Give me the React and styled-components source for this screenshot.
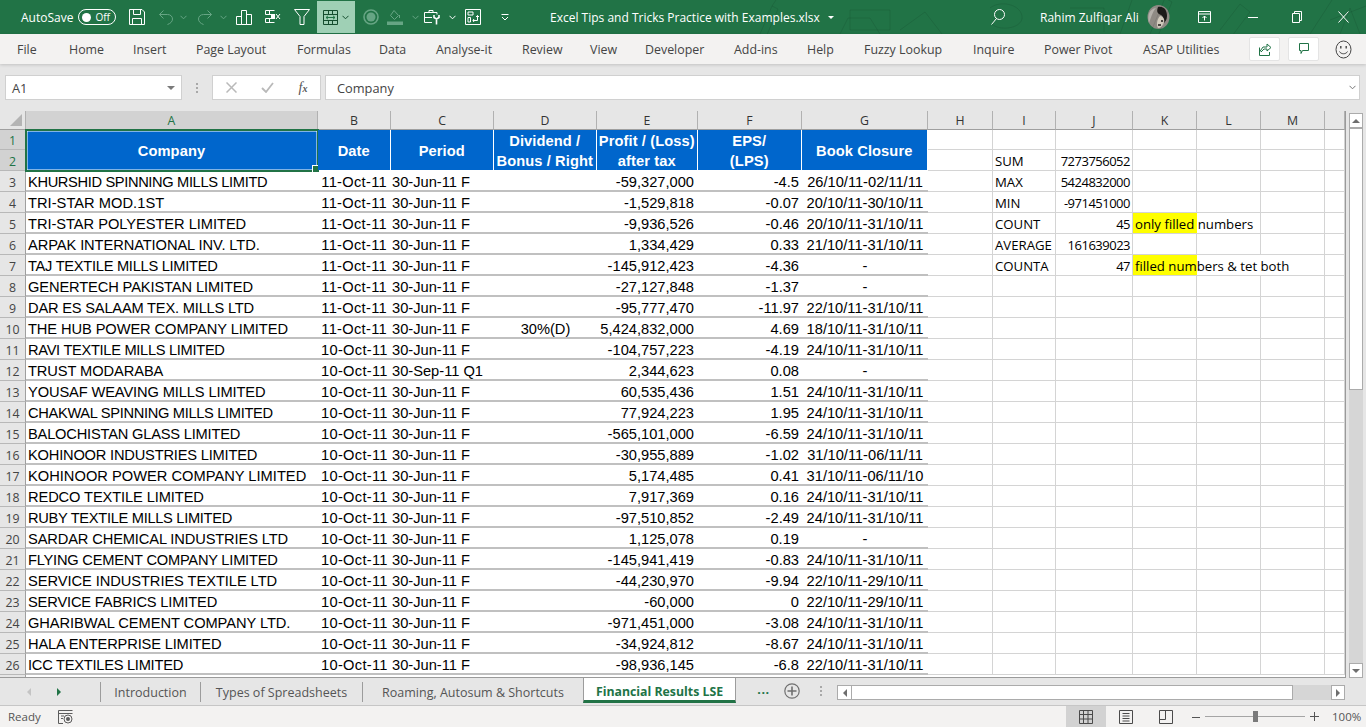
import React from 'react';
import styled, { createGlobalStyle } from 'styled-components';

const UI_FONT = '"Open Sans", "Noto Sans", sans-serif';
const GREEN = '#217346';

const GlobalStyle = createGlobalStyle`
  html, body { margin: 0; height: 100%; overflow: hidden; background: #e6e6e6; }
  body { font-family: ${UI_FONT}; }
  * { box-sizing: border-box; }
`;

const COLS = ['A', 'B', 'C', 'D', 'E', 'F', 'G', 'H', 'I', 'J', 'K', 'L', 'M', ''];
const COL_WIDTHS = [292, 73, 103, 103, 101, 104, 126, 65, 63, 77, 64, 64, 64, 20];

const HEADERS = [
  ['Company'],
  ['Date'],
  ['Period'],
  ['Dividend /', 'Bonus / Right'],
  ['Profit / (Loss)', 'after tax'],
  ['EPS/', '(LPS)'],
  ['Book Closure'],
];

// last arg is letter-spacing: the original uses hinted Arial, capitals come out at uneven widths
const row = (name, date, period, div, profit, eps, closure, track) => ({ name, date, period, div, profit, eps, closure, track });
const F = '30-Jun-11 F';
const D1 = '11-Oct-11';
const D2 = '10-Oct-11';

const RECORDS = [
  row('KHURSHID SPINNING MILLS LIMITD', D1, F, '', '-59,327,000', '-4.5', '26/10/11-02/11/11', -0.36),
  row('TRI-STAR MOD.1ST', D1, F, '', '-1,529,818', '-0.07', '20/10/11-30/10/11', 0.03),
  row('TRI-STAR POLYESTER LIMITED', D1, F, '', '-9,936,526', '-0.46', '20/10/11-31/10/11', -0.045),
  row('ARPAK INTERNATIONAL INV. LTD.', D1, F, '', '1,334,429', '0.33', '21/10/11-31/10/11', -0.09),
  row('TAJ TEXTILE MILLS LIMITED', D1, F, '', '-145,912,423', '-4.36', '-', -0.28),
  row('GENERTECH PAKISTAN LIMITED', D1, F, '', '-27,127,848', '-1.37', '-', -0.12),
  row('DAR ES SALAAM TEX. MILLS LTD', D1, F, '', '-95,777,470', '-11.97', '22/10/11-31/10/11', -0.2),
  row('THE HUB POWER COMPANY LIMITED', D1, F, '30%(D)', '5,424,832,000', '4.69', '18/10/11-31/10/11', -0.09),
  row('RAVI TEXTILE MILLS LIMITED', D2, F, '', '-104,757,223', '-4.19', '24/10/11-31/10/11', -0.31),
  row('TRUST MODARABA', D2, '30-Sep-11 Q1', '', '2,344,623', '0.08', '-', -0.09),
  row('YOUSAF WEAVING MILLS LIMITED', D2, F, '', '60,535,436', '1.51', '24/10/11-31/10/11', -0.12),
  row('CHAKWAL SPINNING MILLS LIMITED', D2, F, '', '77,924,223', '1.95', '24/10/11-31/10/11', -0.33),
  row('BALOCHISTAN GLASS LIMITED', D2, F, '', '-565,101,000', '-6.59', '24/10/11-31/10/11', -0.2),
  row('KOHINOOR INDUSTRIES LIMITED', D2, F, '', '-30,955,889', '-1.02', '31/10/11-06/11/11', -0.2),
  row('KOHINOOR POWER COMPANY LIMITED', D2, F, '', '5,174,485', '0.41', '31/10/11-06/11/10', 0.01),
  row('REDCO TEXTILE LIMITED', D2, F, '', '7,917,369', '0.16', '24/10/11-31/10/11', -0.11),
  row('RUBY TEXTILE MILLS LIMITED', D2, F, '', '-97,510,852', '-2.49', '24/10/11-31/10/11', -0.31),
  row('SARDAR CHEMICAL INDUSTRIES LTD', D2, F, '', '1,125,078', '0.19', '-', -0.13),
  row('FLYING CEMENT COMPANY LIMITED', D2, F, '', '-145,941,419', '-0.83', '24/10/11-31/10/11', -0.23),
  row('SERVICE INDUSTRIES TEXTILE LTD', D2, F, '', '-44,230,970', '-9.94', '22/10/11-29/10/11', -0.06),
  row('SERVICE FABRICS LIMITED', D2, F, '', '-60,000', '0', '22/10/11-29/10/11', -0.16),
  row('GHARIBWAL CEMENT COMPANY LTD.', D2, F, '', '-971,451,000', '-3.08', '24/10/11-31/10/11', -0.06),
  row('HALA ENTERPRISE LIMITED', D2, F, '', '-34,924,812', '-8.67', '24/10/11-31/10/11', -0.16),
  row('ICC TEXTILES LIMITED', D2, F, '', '-98,936,145', '-6.8', '22/10/11-31/10/11', -0.26),
];

// side calculations in columns I..K, keyed by sheet row
const SUMMARY = {
  2: ['SUM', '7273756052'],
  3: ['MAX', '5424832000'],
  4: ['MIN', '-971451000'],
  5: ['COUNT', '45', 'only filled numbers'],
  6: ['AVERAGE', '161639023'],
  7: ['COUNTA', '47', 'filled numbers & tet both'],
};

const Page = styled.div`
  width: 1366px;
  height: 727px;
  display: flex;
  flex-direction: column;
  overflow: hidden;
  background: #e6e6e6;
  font-family: ${UI_FONT};
`;

/* title bar */
const TitleBar = styled.header`
  position: relative;
  height: 34px;
  flex: none;
  display: flex;
  align-items: center;
  background: ${GREEN};
  color: #fff;
  font-size: 12px;
  overflow: hidden;
`;
const Doodles = styled.svg`
  position: absolute;
  left: 720px;
  top: 0;
  width: 646px;
  height: 34px;
  fill: none;
  stroke: rgba(0, 0, 0, 0.09);
  stroke-width: 1;
`;
const AutoSave = styled.span`
  margin-left: 21px;
  width: 57px;
  flex: none;
`;
const Toggle = styled.span`
  width: 38px;
  height: 16px;
  flex: none;
  margin-right: 13px;
  border: 1px solid #fff;
  border-radius: 8px;
  display: flex;
  align-items: center;
  justify-content: space-between;
  padding: 0 5px 0 3px;
  font-size: 10px;
  &::before {
    content: '';
    width: 9px;
    height: 9px;
    border-radius: 50%;
    background: #fff;
  }
`;
const Qat = styled.span`
  width: ${(p) => p.$w || 29}px;
  height: 32px;
  flex: none;
  display: flex;
  align-items: center;
  gap: ${(p) => (p.$on ? 4 : 0)}px;
  color: ${(p) => (p.$dim ? '#66a584' : p.$on ? '#144d2e' : '#fff')};
  background: ${(p) => (p.$on ? '#9fd0b5' : 'transparent')};
  padding-left: ${(p) => (p.$on ? 6 : 0)}px;
  margin-left: ${(p) => p.$ml || 0}px;
`;
const Glyph = styled.svg`
  display: block;
  flex: none;
  fill: none;
  stroke: currentColor;
  stroke-width: 1;
`;
const DocTitle = styled.span`
  position: relative;
  margin-left: 37px;
  width: 440px;
  flex: none;
  white-space: nowrap;
  display: flex;
  align-items: center;
  gap: 8px;
`;
const TitleCaret = styled.span`
  width: 0;
  height: 0;
  border-left: 3px solid transparent;
  border-right: 3px solid transparent;
  border-top: 3px solid #fff;
`;
const UserName = styled.span`
  margin-left: 19px;
  width: 107px;
  flex: none;
  white-space: nowrap;
`;

/* ribbon tabs */
const RibbonTabs = styled.nav`
  height: 30px;
  flex: none;
  display: flex;
  align-items: center;
  padding-left: 2px;
  background: #f3f2f1;
  box-shadow: 0 1px 3px rgba(0, 0, 0, 0.16);
  font-size: 12.4px;
  color: #444;
  position: relative;
`;
const RibbonTab = styled.span`
  padding: 0 15px;
  white-space: nowrap;
  flex: none;
  width: ${(p) => p.$w}px;
`;
const RibbonSide = styled.div`
  margin-left: 16px;
  display: flex;
  align-items: center;
  gap: 8px;
`;
const RibbonButton = styled.span`
  width: 31px;
  height: 24px;
  display: flex;
  align-items: center;
  justify-content: center;
  background: #fff;
  border: 1px solid #e4e4e4;
  border-radius: 2px;
  color: ${GREEN};
`;
const Smiley = styled.span`
  margin-left: 8px;
  color: #444;
`;

/* name box and formula bar */
const FormulaRow = styled.div`
  height: 47px;
  flex: none;
  display: flex;
  align-items: flex-start;
  padding: 11px 6px 0 5px;
  font-size: 12.8px;
  color: #444;
`;
const Field = styled.div`
  height: 25px;
  width: ${(p) => (p.$w ? `${p.$w}px` : 'auto')};
  flex: ${(p) => (p.$w ? 'none' : 1)};
  display: flex;
  align-items: center;
  justify-content: space-between;
  background: #fff;
  border: 1px solid #d0d0d0;
  padding: 0 ${(p) => p.$pr || 6}px 0 ${(p) => p.$pl || 6}px;
`;
const Caret = styled.span`
  width: 0;
  height: 0;
  border-left: 4px solid transparent;
  border-right: 4px solid transparent;
  border-top: 4px solid #7a7a7a;
`;
const ExpandArrow = styled.span`
  color: #777;
`;
const Grip = styled.span`
  width: 30px;
  height: 25px;
  flex: none;
  display: flex;
  align-items: center;
  justify-content: center;
  &::before {
    content: '';
    width: 2px;
    height: 2px;
    background: #a8a8a8;
    box-shadow: 0 -4px 0 #a8a8a8, 0 4px 0 #a8a8a8;
  }
`;
const FormulaButtons = styled.div`
  width: 109px;
  height: 25px;
  flex: none;
  margin-right: 4px;
  display: flex;
  align-items: center;
  background: #fff;
  border: 1px solid #d0d0d0;
  color: #b9b9b9;
`;
const FxButton = styled.span`
  width: 36px;
  flex: none;
  display: flex;
  justify-content: center;
`;
const FxText = styled.span`
  font-family: "Liberation Serif", serif;
  font-style: italic;
  font-size: 14px;
  color: #555;
  small {
    font-size: 10px;
    font-weight: 700;
  }
`;

/* sheet */
const Body = styled.div`
  height: 567px;
  flex: none;
  display: flex;
`;
const Sheet = styled.div`
  width: 1346px;
  height: 567px;
  flex: none;
  overflow: hidden;
  display: grid;
  grid-template-columns: 26px ${COL_WIDTHS.map((w) => `${w}px`).join(' ')};
  grid-template-rows: 19px 20px repeat(25, 21px);
  background: #fff;
  border-right: 1px solid #9a9a9a;
  border-bottom: 1px solid #9a9a9a;
  font-family: "Liberation Sans", Arial, sans-serif;
  font-size: 14.67px;
  color: #000;
`;
const Corner = styled.div`
  background: #e6e6e6;
  border-right: 1px solid #b1b1b1;
  border-bottom: 1px solid #9f9f9f;
  position: relative;
  &::after {
    content: '';
    position: absolute;
    right: 3px;
    bottom: 3px;
    border-left: 12px solid transparent;
    border-bottom: 12px solid #b4b4b4;
  }
`;
const ColHead = styled.div`
  background: ${(p) => (p.$active ? '#d2d2d2' : '#e6e6e6')};
  color: ${(p) => (p.$active ? GREEN : '#333')};
  border-right: 1px solid #b1b1b1;
  border-bottom: 1px solid #9f9f9f;
  font-family: ${UI_FONT};
  font-size: 12.3px;
  display: flex;
  align-items: center;
  justify-content: center;
`;
const RowHead = styled.div`
  background: ${(p) => (p.$active ? '#d2d2d2' : '#e6e6e6')};
  color: ${(p) => (p.$active ? GREEN : '#444')};
  border-right: 1px solid #9f9f9f;
  border-bottom: 1px solid #b8b8b8;
  font-family: ${UI_FONT};
  font-size: 12.3px;
  padding-top: 2px;
  display: flex;
  align-items: center;
  justify-content: center;
`;
const TitleCell = styled.div`
  grid-row: span 2;
  position: relative;
  background: #0066cc;
  color: #fff;
  font-weight: 700;
  letter-spacing: 0.1px;
  line-height: 20px;
  text-align: center;
  white-space: nowrap;
  display: flex;
  flex-direction: column;
  align-items: center;
  justify-content: center;
  padding-top: 2px;
  margin: 0 1.5px 1px 0;
  ${(p) =>
    p.$selected &&
    `
    margin: 1px 1px 1px 0;
    padding-top: 0;
    &::before {
      content: '';
      position: absolute;
      inset: -2px -2px -2px -1px;
      border: 2px solid ${GREEN};
      box-shadow: inset 0 0 0 0.5px #fff;
    }
    &::after {
      content: '';
      position: absolute;
      right: -3px;
      bottom: -3px;
      width: 6px;
      height: 6px;
      background: ${GREEN};
      border: 1px solid #fff;
    }
  `}
`;
const DataCell = styled.div`
  border-bottom: 2px solid #c0c0c0;
  white-space: nowrap;
  line-height: 21px;
  text-align: ${(p) => p.$align || 'left'};
  letter-spacing: ${(p) => p.$track || 0}px;
  padding: 1px ${(p) => p.$pr ?? 3}px 0 ${(p) => p.$pl ?? 3}px;
`;
const GridCell = styled.div`
  border-right: ${(p) => (p.$open ? 'none' : '1px solid #d4d4d4')};
  border-bottom: 1px solid #d4d4d4;
  background: ${(p) => (p.$mark ? '#ffff00' : 'transparent')};
  font-family: ${UI_FONT};
  font-size: 13.2px;
  line-height: 22px;
  white-space: nowrap;
  padding: 0 2px;
`;
const NumberCell = styled(GridCell)`
  text-align: right;
  letter-spacing: -0.5px;
  font-size: 13px;
  padding-right: 2px;
`;

/* vertical scrollbar */
const VScroll = styled.div`
  width: 20px;
  flex: none;
  display: flex;
  flex-direction: column;
  padding: 2px 3px 0 3px;
`;
const ScrollBtn = styled.span`
  height: ${(p) => p.$size || 15}px;
  width: ${(p) => p.$w || 'auto'};
  flex: none;
  display: flex;
  align-items: center;
  justify-content: center;
  background: #fff;
  border: 1px solid #ababab;
  color: #6e6e6e;
`;
const VTrack = styled.div`
  flex: 1;
  background: #d6d6d6;
`;
const VThumb = styled.div`
  height: 262px;
  background: #fff;
  border: 1px solid #ababab;
`;

/* sheet tabs */
const TabBar = styled.div`
  height: 28px;
  flex: none;
  display: flex;
  align-items: flex-start;
  font-size: 12.5px;
  color: #555;
  border-bottom: 1px solid #c6c6c6;
`;
const NavZone = styled.div`
  width: 101px;
  height: 20px;
  flex: none;
  margin-top: 4px;
  display: flex;
  align-items: center;
  padding-left: 27px;
  gap: 26px;
  border-right: 1px solid #9c9c9c;
`;
const SheetTab = styled.div`
  height: ${(p) => (p.$active ? 25 : 20)}px;
  margin-top: ${(p) => (p.$active ? 0 : 4)}px;
  flex: none;
  width: ${(p) => p.$w}px;
  display: flex;
  align-items: center;
  justify-content: center;
  white-space: nowrap;
  border-right: ${(p) => (p.$active || p.$plain ? 'none' : '1px solid #9c9c9c')};
  ${(p) =>
    p.$active &&
    `
    background: #fff;
    color: ${GREEN};
    font-weight: 700;
    font-size: 12.3px;
    padding-top: 4px;
    border-left: 1px solid #9c9c9c;
    border-right: 1px solid #9c9c9c;
    border-bottom: 3px solid ${GREEN};
  `}
`;
const More = styled.span`
  width: 48px;
  padding-left: 7px;
  flex: none;
  color: ${GREEN};
  font-weight: 700;
  letter-spacing: 0.6px;
  text-align: center;
  line-height: 22px;
  margin-top: 1px;
`;
const AddSheet = styled.span`
  width: 16px;
  height: 16px;
  flex: none;
  margin-top: 5px;
  color: #707070;
`;
const TabGrip = styled(Grip)`
  width: 37px;
  height: 18px;
  margin-top: 4px;
  padding-left: 5px;
`;
const HScroll = styled.div`
  width: 508px;
  height: 15px;
  flex: none;
  margin-top: 7px;
  display: flex;
  background: #d6d6d6;
`;
const HThumb = styled.div`
  width: 441px;
  background: #fff;
  border: 1px solid #ababab;
  border-left: none;
`;
const HGap = styled.div`
  flex: 1;
`;

/* status bar */
const StatusBar = styled.footer`
  height: 21px;
  flex: none;
  display: flex;
  align-items: center;
  padding-left: 8px;
  background: #f3f2f1;
  font-size: 11.5px;
  color: #555;
`;
const Ready = styled.span`
  width: 50px;
  flex: none;
`;
const ViewBtn = styled.span`
  width: 40px;
  height: 21px;
  flex: none;
  display: flex;
  align-items: center;
  justify-content: center;
  color: #4a4a4a;
  background: ${(p) => (p.$on ? '#d2d2d2' : 'transparent')};
`;
const Views = styled.div`
  margin-left: auto;
  display: flex;
`;
const Zoomer = styled.div`
  display: flex;
  align-items: center;
  margin-left: 6px;
  width: 174px;
  color: #555;
  flex: none;
`;
const Slider = styled.span`
  position: relative;
  width: 100px;
  height: 1px;
  margin: 0 5px;
  background: #a5a5a5;
  flex: none;
  &::after {
    content: '';
    position: absolute;
    left: 48px;
    top: -5px;
    width: 5px;
    height: 11px;
    background: #7a7a7a;
  }
`;
const Percent = styled.span`
  margin-left: 13px;
  font-size: 11.5px;
`;

/* icons */
const Svg = ({ w = 16, h = 16, children, ...rest }) => (
  <Glyph width={w} height={h} viewBox={`0 0 ${w} ${h}`} {...rest}>
    {children}
  </Glyph>
);
const Chevron = () => (
  <Svg w={7} h={5}>
    <path d="M.5 .8 3.5 3.8 6.5 .8" />
  </Svg>
);
const SaveIcon = () => (
  <Svg>
    <path d="M.5.5H13L15.5 3V15.5H.5ZM4.5.5V5.5H11.5V.5M3.5 15.5V9.5H12.5V15.5" />
  </Svg>
);
const UndoIcon = () => (
  <Svg>
    <path d="M5.5 1.5 1.5 5.5 5.5 9.5M1.5 5.5H9.5C12.5 5.5 14.5 7.5 14.5 10 14.5 12.5 12.5 14.5 9.5 15.5" />
  </Svg>
);
const RedoIcon = () => (
  <Svg>
    <path d="M10.5 1.5 14.5 5.5 10.5 9.5M14.5 5.5H6.5C3.5 5.5 1.5 7.5 1.5 10 1.5 12.5 3.5 14.5 6.5 15.5" />
  </Svg>
);
const ChartIcon = () => (
  <Svg>
    <path d="M.5 15.5V7.5H5.5V15.5ZM5.5 15.5V1.5H10.5V15.5ZM10.5 15.5V5.5H15.5V15.5Z" />
  </Svg>
);
const RemoveDupIcon = () => (
  <Svg>
    <path d="M.5 1.5H9.5M.5 5.5H7M.5 9.5H7M.5 13.5H9.5M.5 1.5V5.5M.5 9.5V13.5M4.5 1.5V5.5M4.5 9.5V13.5M11 5 15 10M15 5 11 10" />
    <path d="M6 5H10V10H6Z" fill="currentColor" stroke="none" />
  </Svg>
);
const FilterIcon = () => (
  <Svg>
    <path d="M.5 .5H15.5L10 7.5V15.5H6V7.5Z" />
  </Svg>
);
const MergeIcon = () => (
  <Svg w={15} h={15}>
    <path d="M.5 .5H14.5V14.5H.5ZM.5 4.5H14.5M.5 10.5H14.5M5.5 .5V4.5M9.5 .5V4.5M5.5 10.5V14.5M9.5 10.5V14.5" />
    <path d="M3 7.5H12M5 5.8 3 7.5 5 9.2M10 5.8 12 7.5 10 9.2" stroke="#217346" />
  </Svg>
);
const RecordIcon = () => (
  <Svg>
    <circle cx="8" cy="8" r="7" strokeWidth="1.6" />
    <circle cx="8" cy="8" r="4.5" fill="currentColor" stroke="none" />
  </Svg>
);
const FillIcon = () => (
  <Svg>
    <path d="M7 1.5 11.5 6.5 7.5 10.5 3.5 6.5ZM12.5 6V9" />
    <path d="M0 12.5H16V16H0Z" fill="currentColor" stroke="none" />
  </Svg>
);
const ToolsIcon = () => (
  <Svg w={18} h={16}>
    <path d="M.5 3.5H13V5.5M.5 3.5V13.5H8M5 3.5V1.5H9V3.5M.5 8.5H8" />
    <path d="M10 6V8.5L12.5 10 15 8.5V6M12.5 10V15.5" strokeWidth="1.6" />
  </Svg>
);
const FormIcon = () => (
  <Svg>
    <path d="M.5 .5H15.5V15.5H.5ZM3 3H8V6H3ZM3 8.5V13H5.5V8.5ZM8 11.5H12.5V6.5M11 8 12.5 6.5 14 8M9 13 8 11.5 9 10" />
  </Svg>
);
const QatMore = () => (
  <Svg w={8} h={7}>
    <path d="M.5 .5H7.5M1 3 4 6 7 3" />
  </Svg>
);
const SearchIcon = () => (
  <Svg w={16} h={18}>
    <circle cx="9.5" cy="6.5" r="5" />
    <path d="M6.5 10.5 1.5 16.5" />
  </Svg>
);
const AvatarIcon = () => (
  <svg width="23" height="24" viewBox="0 0 23 24">
    <ellipse cx="11.5" cy="12" rx="11" ry="12" fill="#8f8a84" />
    <path d="M2 18C5 10 6 6 9 3 3 4 0 9 2 18Z" fill="#b5b1ab" />
    <path d="M11 2C17 1 20 5 20 11 20 15 18 17 16 19 17 14 16 11 14 10 11 9 9 7 11 2Z" fill="#1d1b19" />
    <path d="M13 11C16 11 18 14 17 18 16 21 13 23 11 23 9 20 10 14 13 11Z" fill="#d2cbbd" />
    <path d="M14 15H16V17H14ZM11 19H14V21H11Z" fill="#4a4540" />
  </svg>
);
const DisplayIcon = () => (
  <Svg w={13} h={12}>
    <path d="M.5 .5H12.5V11.5H.5ZM.5 3H12.5M6.5 9.5V5M4.5 7 6.5 5 8.5 7" />
  </Svg>
);
const WindowLine = () => (
  <Svg w={10} h={10}>
    <path d="M0 5.5H10" />
  </Svg>
);
const WindowRestore = () => (
  <Svg w={10} h={12}>
    <path d="M.5 2.5H7.5V11.5H.5ZM2.5 2.5V.5H9.5V9.5H7.5" />
  </Svg>
);
const WindowClose = () => (
  <Svg w={11} h={12}>
    <path d="M.5 .5 10.5 11.5M10.5 .5 .5 11.5" />
  </Svg>
);
const ShareIcon = () => (
  <Svg w={14} h={16}>
    <path d="M1.5 6.5V14.5H11.5V11M1.5 11 5 6H9V3L13 6.5 9 10V8H6L3 11" />
  </Svg>
);
const CommentIcon = () => (
  <Svg w={10} h={12}>
    <path d="M.5 .5H9.5V7.5H3.5L2 10.5V7.5H.5Z" />
  </Svg>
);
const SmileyIcon = () => (
  <Svg w={17} h={19}>
    <ellipse cx="8.5" cy="9.5" rx="7.5" ry="8.5" />
    <path d="M5.8 6V8.5M11.2 6V8.5" strokeWidth="1.4" />
    <path d="M4.5 11.5C6 14.5 11 14.5 12.5 11.5" />
  </Svg>
);
const Cross = () => (
  <Svg w={11} h={11}>
    <path d="M.5 .5 10.5 10.5M10.5 .5 .5 10.5" strokeWidth="1.5" />
  </Svg>
);
const Tick = () => (
  <Svg w={13} h={11}>
    <path d="M1 6 5 10 12 1" strokeWidth="1.8" />
  </Svg>
);
const Arrow = ({ dir, color = '#6e6e6e', size = 4 }) => {
  const shapes = {
    up: `M0 ${size}L${size} 0 ${size * 2} ${size}Z`,
    down: `M0 0H${size * 2}L${size} ${size}Z`,
    left: `M${size} 0V${size * 2}L0 ${size}Z`,
    right: `M0 0V${size * 2}L${size} ${size}Z`,
  };
  const flat = dir === 'up' || dir === 'down';
  return (
    <Glyph width={flat ? size * 2 : size} height={flat ? size : size * 2}>
      <path d={shapes[dir]} fill={color} stroke="none" />
    </Glyph>
  );
};
const PlusCircle = () => (
  <Svg>
    <circle cx="8" cy="8" r="7.2" strokeWidth="1.2" />
    <path d="M8 3.5V12.5M3.5 8H12.5" strokeWidth="1.6" />
  </Svg>
);
const MacroIcon = () => (
  <Svg w={15} h={14} color="#5c5c5c">
    <path d="M.5 .5H14.5M.5 3.5H14.5M.5 .5V13.5H5M3 6H6M3 8.5H5" />
    <circle cx="10" cy="9" r="4" />
    <circle cx="10" cy="9" r="2" fill="currentColor" stroke="none" />
  </Svg>
);
const NormalView = () => (
  <Svg w={14} h={14}>
    <path d="M.5 .5H13.5V13.5H.5ZM.5 4.5H13.5M.5 9H13.5M4.5 .5V13.5M9 .5V13.5" />
  </Svg>
);
const LayoutView = () => (
  <Svg w={14} h={14}>
    <path d="M.5 .5H13.5V13.5H.5ZM3.5 3.5H10.5M3.5 6H10.5M3.5 8.5H10.5M3.5 11H10.5" />
  </Svg>
);
const BreakView = () => (
  <Svg w={14} h={14}>
    <path d="M.5 .5H13.5V13.5H.5ZM.5 9.5H6.5V.5" />
  </Svg>
);

const RIBBON = [
  'File', 'Home', 'Insert', 'Page Layout', 'Formulas', 'Data', 'Analyse-it', 'Review', 'View',
  'Developer', 'Add-ins', 'Help', 'Fuzzy Lookup', 'Inquire', 'Power Pivot', 'ASAP Utilities',
];
const RIBBON_WIDTHS = [52, 64, 63, 101, 82, 57, 86, 68, 55, 89, 73, 57, 109, 71, 99, 105];

const rightColumns = (rowNo) => {
  const info = SUMMARY[rowNo] || [];
  return (
    <>
      <GridCell />
      <GridCell>{info[0]}</GridCell>
      <NumberCell>{info[1]}</NumberCell>
      <GridCell $mark={Boolean(info[2])} $open={Boolean(info[2])}>{info[2]}</GridCell>
      <GridCell $open={rowNo === 7} />
      <GridCell />
      <GridCell />
    </>
  );
};

const App = () => (
  <Page>
    <GlobalStyle />
    <TitleBar>
      <Doodles viewBox="0 0 646 34">
        <path d="M40 34 52 6 58 9 46 37M52 6 56 0M120 34 128 18H150L160 34M180 30 205 12 222 34M400 34 412 0M430 34 445 -2 452 2 438 36M500 30 520 4 530 12 512 36M590 34 612 0M620 34 630 8 640 34" />
        <path d="M130 10H170V30H130ZM270 8C280 0 300 4 302 16 304 28 280 32 272 24M350 8H384V32M610 20 646 6" />
      </Doodles>
      <AutoSave>AutoSave</AutoSave>
      <Toggle>Off</Toggle>
      <Qat><SaveIcon /></Qat>
      <Qat $dim $w={22}><UndoIcon /></Qat>
      <Qat $dim $w={17}><Chevron /></Qat>
      <Qat $dim $w={23}><RedoIcon /></Qat>
      <Qat $dim $w={16}><Chevron /></Qat>
      <Qat><ChartIcon /></Qat>
      <Qat><RemoveDupIcon /></Qat>
      <Qat $w={23}><FilterIcon /></Qat>
      <Qat $on $w={38}>
        <MergeIcon />
        <Chevron />
      </Qat>
      <Qat $dim $w={24} $ml={8}><RecordIcon /></Qat>
      <Qat $dim $w={25}><FillIcon /></Qat>
      <Qat $dim $w={12}><Chevron /></Qat>
      <Qat $w={25}><ToolsIcon /></Qat>
      <Qat $w={16}><Chevron /></Qat>
      <Qat $w={36}><FormIcon /></Qat>
      <Qat $w={12}><QatMore /></Qat>
      <DocTitle>Excel Tips and Tricks Practice with Examples.xlsx<TitleCaret /></DocTitle>
      <Qat $w={31}><SearchIcon /></Qat>
      <UserName>Rahim Zulfiqar Ali</UserName>
      <Qat $w={51}><AvatarIcon /></Qat>
      <Qat $w={50}><DisplayIcon /></Qat>
      <Qat $w={44}><WindowLine /></Qat>
      <Qat $w={46}><WindowRestore /></Qat>
      <Qat $w={20}><WindowClose /></Qat>
    </TitleBar>

    <RibbonTabs>
      {RIBBON.map((t, i) => (
        <RibbonTab key={t} $w={RIBBON_WIDTHS[i]}>{t}</RibbonTab>
      ))}
      <RibbonSide>
        <RibbonButton><ShareIcon /></RibbonButton>
        <RibbonButton><CommentIcon /></RibbonButton>
        <Smiley><SmileyIcon /></Smiley>
      </RibbonSide>
    </RibbonTabs>

    <FormulaRow>
      <Field $w={177}>A1<Caret /></Field>
      <Grip />
      <FormulaButtons>
        <FxButton><Cross /></FxButton>
        <FxButton><Tick /></FxButton>
        <FxButton><FxText>f<small>x</small></FxText></FxButton>
      </FormulaButtons>
      <Field $pl={11} $pr={3}>
        Company
        <ExpandArrow><Chevron /></ExpandArrow>
      </Field>
    </FormulaRow>

    <Body>
      <Sheet>
        <Corner />
        {COLS.map((c, i) => (
          <ColHead key={i} $active={c === 'A'}>{c}</ColHead>
        ))}

        <RowHead $active>1</RowHead>
        {HEADERS.map((lines, i) => (
          <TitleCell key={lines[0]} $selected={i === 0}>
            {lines.map((l) => <span key={l}>{l}</span>)}
          </TitleCell>
        ))}
        {rightColumns(1)}

        <RowHead $active>2</RowHead>
        {rightColumns(2)}

        {RECORDS.map((r, i) => {
          const rowNo = i + 3;
          return (
            <React.Fragment key={rowNo}>
              <RowHead>{rowNo}</RowHead>
              <DataCell $pl={2} $track={r.track}>{r.name}</DataCell>
              <DataCell $align="right" $pr={4} $track={0.3}>{r.date}</DataCell>
              <DataCell $pl={1}>{r.period}</DataCell>
              <DataCell $align="center">{r.div}</DataCell>
              <DataCell $align="right" $pr={4}>{r.profit}</DataCell>
              <DataCell $align="right" $pr={3}>{r.eps}</DataCell>
              <DataCell $align="center">{r.closure}</DataCell>
              {rightColumns(rowNo)}
            </React.Fragment>
          );
        })}
        <RowHead />
      </Sheet>
      <VScroll>
        <ScrollBtn><Arrow dir="up" /></ScrollBtn>
        <VTrack><VThumb /></VTrack>
        <ScrollBtn $size={15}><Arrow dir="down" /></ScrollBtn>
      </VScroll>
    </Body>

    <TabBar>
      <NavZone>
        <Arrow dir="left" color="#c4c4c4" />
        <Arrow dir="right" color={GREEN} />
      </NavZone>
      <SheetTab $w={100}>Introduction</SheetTab>
      <SheetTab $w={162}>Types of Spreadsheets</SheetTab>
      <SheetTab $w={220} $plain>Roaming, Autosum &amp; Shortcuts</SheetTab>
      <SheetTab $active $w={153}>Financial Results LSE</SheetTab>
      <More>...</More>
      <AddSheet><PlusCircle /></AddSheet>
      <TabGrip />
      <HScroll>
        <ScrollBtn $w="15px"><Arrow dir="left" /></ScrollBtn>
        <HThumb />
        <HGap />
        <ScrollBtn $w="14px"><Arrow dir="right" /></ScrollBtn>
      </HScroll>
    </TabBar>

    <StatusBar>
      <Ready>Ready</Ready>
      <MacroIcon />
      <Views>
        <ViewBtn $on><NormalView /></ViewBtn>
        <ViewBtn><LayoutView /></ViewBtn>
        <ViewBtn><BreakView /></ViewBtn>
      </Views>
      <Zoomer>
        <Svg w={8} h={8}><path d="M0 4.5H8" /></Svg>
        <Slider />
        <Svg w={9} h={9}><path d="M0 4.5H9M4.5 0V9" /></Svg>
        <Percent>100%</Percent>
      </Zoomer>
    </StatusBar>
  </Page>
);

export default App;
